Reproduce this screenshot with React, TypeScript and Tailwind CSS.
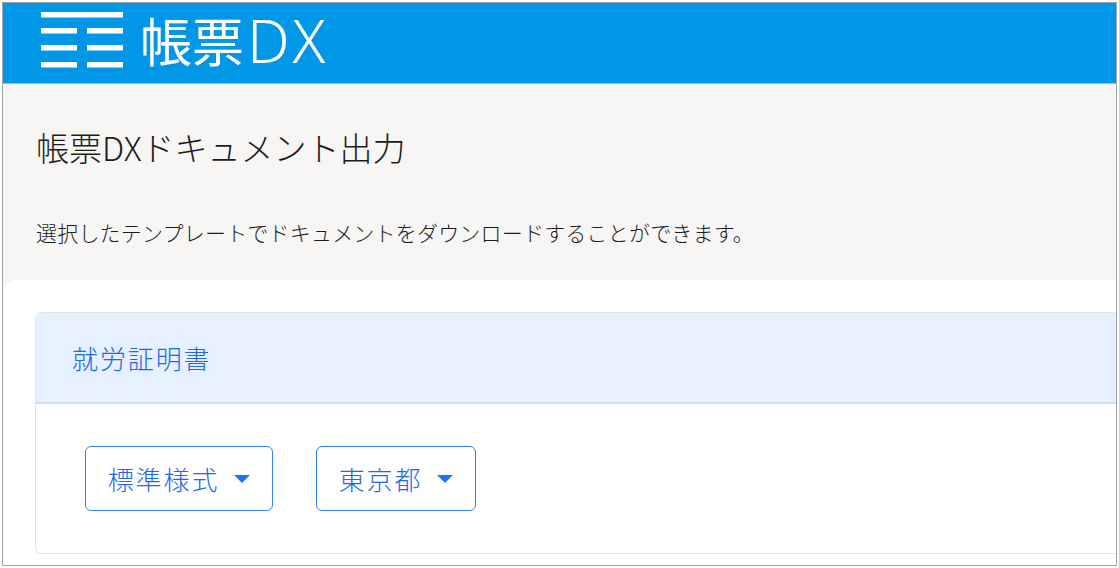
import React from 'react';

const cjk = "font-['Noto_Sans_CJK_JP','Noto_Sans',sans-serif]";

function LogoMark() {
  return (
    <svg width="82" height="56" viewBox="0 0 82 56" fill="#fff" className="shrink-0">
      <rect x="0" y="0" width="82" height="5.5" />
      <rect x="0" y="16" width="36" height="5.5" />
      <rect x="46" y="16" width="36" height="5.5" />
      <rect x="0" y="33" width="36" height="5.5" />
      <rect x="46" y="33" width="36" height="5.5" />
      <rect x="0" y="50" width="36" height="5.5" />
      <rect x="46" y="50" width="36" height="5.5" />
    </svg>
  );
}

function DropdownButton({ label, width }: { label: string; width: string }) {
  return (
    <button className={`${width} h-[65px] flex items-center justify-center gap-[15px] bg-white border-[1.5px] border-[#2b85ff] rounded-[6px] text-[#1f68ec] text-[26px] tracking-[1.9px] font-light`}>
      <span>{label}</span>
      <span className="w-0 h-0 border-x-[8px] border-x-transparent border-t-[8px] border-t-[#1a75f5]" />
    </button>
  );
}

export default function App() {
  return (
    <div className={`${cjk} w-[1119px] h-[568px] bg-white p-[2px]`}>
      <div className="h-[564px] border border-[#a3a3a3] bg-[#f7f6f4] flex flex-col">
        {/* Header */}
        <header className="h-[81px] shrink-0 bg-[#0098e6] border-b border-[#7cc6ee] flex items-start pl-[38px] pt-[9px] text-white">
          <LogoMark />
          <div className="flex items-center h-[70px] -mt-[6px] ml-[17px] leading-[70px]">
            <span className="text-[52px] font-normal -translate-y-[1px]">帳票</span>
            <span className="ml-[3px] text-[60px] font-['Noto_Sans',sans-serif] font-light tracking-[4px] -translate-y-[1px]">DX</span>
          </div>
        </header>

        {/* Page title */}
        <div className="h-[196px] shrink-0 pl-[33px] text-[#1c1c1c]">
          <h1 className="mt-[39px] text-[33px] leading-[48px] font-light whitespace-nowrap">帳票DXドキュメント出力</h1>
          <p className="mt-[45px] text-[21px] leading-[32px] font-light tracking-[0.2px] whitespace-nowrap">選択したテンプレートでドキュメントをダウンロードすることができます。</p>
        </div>

        {/* Panel */}
        <div className="flex-1 bg-white rounded-tl-[14px] pl-[32px] pt-[32px] overflow-hidden">
          <div className="h-[242px] -mr-[8px] border-[1.5px] border-[#e4e4e4] rounded-[6px] overflow-hidden">
            <div className="h-[91px] bg-[#e6f0fe] border-b-2 border-[#d3dcea] flex items-center pl-[36px] text-[#1f68ec] text-[26px] tracking-[1.9px] font-light">
              就労証明書
            </div>
            <div className="flex gap-[43px] pl-[49px] pt-[42px]">
              <DropdownButton label="標準様式" width="w-[188px]" />
              <DropdownButton label="東京都" width="w-[160px]" />
            </div>
          </div>
        </div>
      </div>
    </div>
  );
}
